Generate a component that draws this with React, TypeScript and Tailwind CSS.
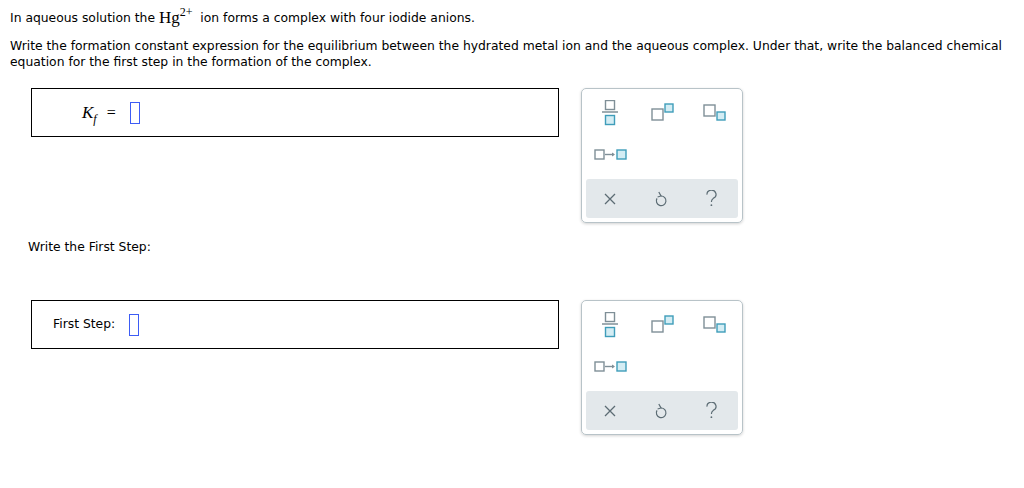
import React from "react";

const gray = "#7f8f97";
const blue = "#3f9dba";
const fill = "#d4edf4";
const ink = "#5c6c74";

function Fraction() {
  return (
    <svg width="18" height="26" viewBox="0 0 18 26">
      <rect x="3.5" y="0.5" width="9" height="9" fill="none" stroke={gray} strokeWidth="1.4" />
      <line x1="0" y1="12" x2="16" y2="12" stroke={gray} strokeWidth="1.5" />
      <rect x="3.5" y="15.5" width="9" height="9" fill={fill} stroke={blue} strokeWidth="1.4" />
    </svg>
  );
}

function Sup() {
  return (
    <svg width="24" height="19" viewBox="0 0 24 19">
      <rect x="1" y="6" width="11" height="11" fill="none" stroke={gray} strokeWidth="1.4" />
      <rect x="14" y="1" width="8" height="8" fill={fill} stroke={blue} strokeWidth="1.4" />
    </svg>
  );
}

function Sub() {
  return (
    <svg width="24" height="17" viewBox="0 0 24 17">
      <rect x="1" y="1" width="11" height="11" fill="none" stroke={gray} strokeWidth="1.4" />
      <rect x="14" y="8" width="8" height="8" fill={fill} stroke={blue} strokeWidth="1.4" />
    </svg>
  );
}

function Arrow() {
  return (
    <svg width="34" height="11" viewBox="0 0 34 11">
      <rect x="1" y="1" width="9" height="9" fill="none" stroke={gray} strokeWidth="1.4" />
      <line x1="11" y1="5.5" x2="20" y2="5.5" stroke={gray} strokeWidth="1.4" />
      <path d="M18 3.5 L21 5.5 L18 7.5 Z" fill={gray} />
      <rect x="23" y="1" width="9" height="9" fill={fill} stroke={blue} strokeWidth="1.4" />
    </svg>
  );
}

function XIcon() {
  return (
    <svg width="12" height="12" viewBox="0 0 12 12">
      <path d="M1 1 L11 11 M11 1 L1 11" stroke={ink} strokeWidth="1.3" fill="none" />
    </svg>
  );
}

function Undo() {
  return (
    <svg width="13" height="16" viewBox="0 0 13 16">
      <path d="M6 5 A4.8 4.8 0 1 1 2 7.4" stroke={ink} strokeWidth="1.2" fill="none" />
      <path d="M3.8 1 L6 5 L2.6 6" stroke={ink} strokeWidth="1.2" fill="none" />
    </svg>
  );
}

function Help() {
  return (
    <svg width="11" height="17" viewBox="0 0 11 17">
      <path d="M1 4.6 A4.5 4.3 0 1 1 7.2 8.4 C5.8 9.2 5.4 10 5.4 12" stroke={ink} strokeWidth="1.2" fill="none" />
      <circle cx="5.4" cy="15.2" r="0.9" fill={ink} />
    </svg>
  );
}

function Palette() {
  return (
    <div className="ml-[22px] flex h-[135px] w-[162px] flex-col rounded-[5px] border border-[#b8c3c8] shadow-[0_1px_3px_rgba(0,0,0,0.18)]">
      <div className="relative h-[90px]">
        <div className="absolute left-[20px] top-[11px]"><Fraction /></div>
        <div className="absolute left-[69px] top-[14px]"><Sup /></div>
        <div className="absolute left-[121px] top-[15px]"><Sub /></div>
        <div className="absolute left-[12px] top-[60px]"><Arrow /></div>
      </div>
      <div className="mx-[4px] flex h-[39px] items-center justify-between rounded-[3px] bg-[#e3e8eb] pl-[18px] pr-[21px]">
        <XIcon />
        <Undo />
        <Help />
      </div>
    </div>
  );
}

function Cursor() {
  return <span className="inline-block h-[22px] w-[10px] border border-[#3d5cf5] bg-white align-middle" />;
}

export default function App() {
  return (
    <div className="min-h-[488px] bg-white px-[10px] pt-[8px] text-[12.35px] text-black" style={{ fontFamily: "'DejaVu Sans', Verdana, sans-serif" }}>
      <p className="flex h-[18px] items-end leading-[16px]">
        In aqueous solution the&nbsp;
        <span className="text-[17px]" style={{ fontFamily: "'Liberation Serif', serif" }}>
          Hg<sup className="top-[-7px] text-[12px]">2+</sup>
        </span>
        &nbsp;&nbsp;ion forms a complex with four iodide anions.
      </p>
      <p className="mt-[12px] leading-[16px]">
        Write the formation constant expression for the equilibrium between the hydrated metal ion and the aqueous complex. Under that, write the balanced chemical equation for the first step in the formation of the complex.
      </p>

      <div className="mt-[18px] flex items-start">
        <div className="ml-[21px] flex h-[49px] w-[528px] items-center border border-black">
          <span className="ml-[50px] text-[17px] italic" style={{ fontFamily: "'Liberation Serif', serif" }}>
            K<sub className="top-[0.4em] text-[12px]">f</sub>
          </span>
          <span className="ml-[10px] text-[16px]" style={{ fontFamily: "'Liberation Serif', serif" }}>=</span>
          <span className="ml-[14px] flex"><Cursor /></span>
        </div>
        <Palette />
      </div>

      <p className="ml-[18px] mt-[16px] leading-[16px]">Write the First Step:</p>

      <div className="mt-[45px] flex items-start">
        <div className="ml-[21px] flex h-[49px] w-[528px] items-center border border-black">
          <span className="ml-[21px]">First Step:</span>
          <span className="ml-[14px] flex"><Cursor /></span>
        </div>
        <Palette />
      </div>
    </div>
  );
}
